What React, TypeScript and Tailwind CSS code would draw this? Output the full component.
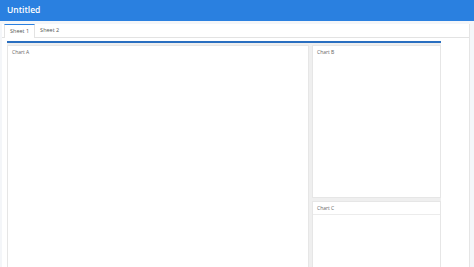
import React from 'react';

const Panel: React.FC<{ title: string; className?: string; divider?: boolean }> = ({ title, className, divider }) => (
  <div className={`bg-white border border-[#e6e6e6] flex flex-col ${className ?? ''}`}>
    <div className={`h-[13px] px-[4px] pt-[1px] flex items-center text-[5px] text-[#666] ${divider ? 'border-b border-[#ececec]' : ''}`}>{title}</div>
    <div className="flex-1" />
  </div>
);

export default function App() {
  return (
    <div className="w-[474px] h-[267px] overflow-hidden bg-white flex flex-col" style={{ fontFamily: '"Open Sans", "Noto Sans", sans-serif' }}>
      <header className="h-[21px] bg-[#2a80e0] flex items-center px-[7px] shrink-0 shadow-[0_1px_1px_rgba(0,0,0,0.15)]">
        <span className="text-white text-[8.5px] font-semibold">Untitled</span>
      </header>
      <div className="flex-1 flex flex-col pl-[2px] pr-[4px] pt-[3px] bg-[#f4f6f9] min-h-0">
        <div className="flex flex-col flex-1 bg-white border-r border-[#e5e5e5] min-h-0 overflow-hidden">
          <div className="flex h-[14px] shrink-0 border-b border-[#e3e3e3] bg-white text-[5.5px] text-[#555] pl-[2px]">
            <div className="px-[5px] flex items-center border-t-[1.5px] border-t-[#2a80e0] border-x border-x-[#e3e3e3] bg-white -mb-px">Sheet 1</div>
            <div className="px-[5px] flex items-center">Sheet 2</div>
          </div>
          <div className="flex-1 flex flex-col pl-[5px] pr-[28px] pt-[3px] min-h-0 -mb-[4px]">
            <div className="h-[2px] bg-[#2a6fc0] shrink-0" />
            <div className="flex-1 flex gap-[3px] bg-[#efefef] pt-[2px] min-h-0">
              <Panel title="Chart A" className="w-[302px]" />
              <div className="flex-1 flex flex-col gap-[3px]">
                <Panel title="Chart B" className="flex-1" />
                <Panel title="Chart C" className="h-[70px]" divider />
              </div>
            </div>
          </div>
        </div>
      </div>
    </div>
  );
}
